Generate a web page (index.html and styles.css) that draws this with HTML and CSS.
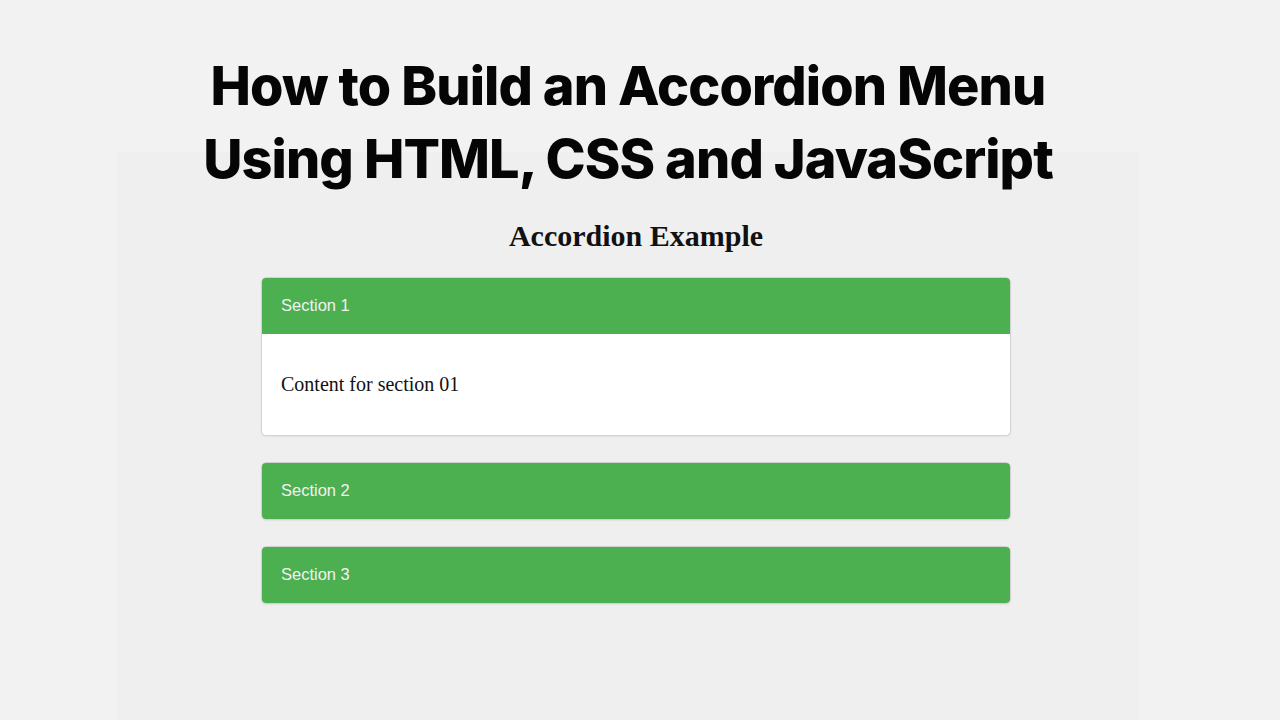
FILE: index.html
```html
<!DOCTYPE html>
<html lang="en">
<head>
  <meta charset="UTF-8">
  <title>Accordion Menu</title>
  <link rel="stylesheet" href="styles.css">
</head>
<body>

  <h1 class="banner">How to Build an Accordion Menu<br>Using HTML, CSS and JavaScript</h1>

  <div class="demo">
    <h2>Accordion Example</h2>

    <div class="accordion">
      <div class="item open">
        <button class="item-header">Section 1</button>
        <div class="item-body">
          <p>Content for section 01</p>
        </div>
      </div>

      <div class="item">
        <button class="item-header">Section 2</button>
        <div class="item-body">
          <p>Content for section 02</p>
        </div>
      </div>

      <div class="item">
        <button class="item-header">Section 3</button>
        <div class="item-body">
          <p>Content for section 03</p>
        </div>
      </div>
    </div>
  </div>

  <script>
    const headers = document.querySelectorAll('.item-header');

    headers.forEach(header => {
      header.addEventListener('click', () => {
        const item = header.parentElement;
        const wasOpen = item.classList.contains('open');
        // Only one section open at a time
        document.querySelectorAll('.item').forEach(i => i.classList.remove('open'));
        if (!wasOpen) item.classList.add('open');
      });
    });
  </script>

</body>
</html>
```

FILE: styles.css
```css
body {
  margin: 0;
  background: #f2f2f2;
  height: 720px;
  overflow: hidden;
}

.banner {
  position: relative;
  z-index: 1;
  margin: 0;
  padding-top: 49px;
  padding-right: 24px;
  text-align: center;
  font-family: Inter, "Open Sans", sans-serif;
  font-weight: 800;
  font-size: 54px;
  line-height: 73px;
  letter-spacing: -0.9px;
  color: #050505;
}

.demo {
  width: 1021px;
  height: 568px;
  margin: -43px 0 0 117px;
  background: #efefef;
  padding-top: 1px;
  box-sizing: border-box;
}

.demo h2 {
  margin: 66px 0 0 144px;
  width: 750px;
  text-align: center;
  font-family: "Liberation Serif", serif;
  font-size: 30px;
  line-height: 34px;
  color: #111;
}

.accordion {
  width: 750px;
  margin: 24px 0 0 144px;
}

.item {
  margin-bottom: 26px;
  border: 1px solid #d2d2d2;
  border-radius: 5px;
  overflow: hidden;
  background: #fff;
  box-shadow: 0 1px 2px rgba(0,0,0,0.06);
}

.item-header {
  display: block;
  width: 100%;
  height: 56px;
  padding: 0 19px 1px;
  border: none;
  background: #4caf50;
  color: #f2f2f2;
  text-align: left;
  font-family: "Liberation Sans", Arial, sans-serif;
  font-size: 16.5px;
  cursor: pointer;
}

.item-body {
  display: none;
  height: 101px;
  padding: 0 19px;
  box-sizing: border-box;
}

.item.open .item-body {
  display: flex;
  align-items: center;
}

.item-body p {
  margin: 0;
  font-family: "Liberation Serif", serif;
  font-size: 20px;
  color: #111;
}
```
